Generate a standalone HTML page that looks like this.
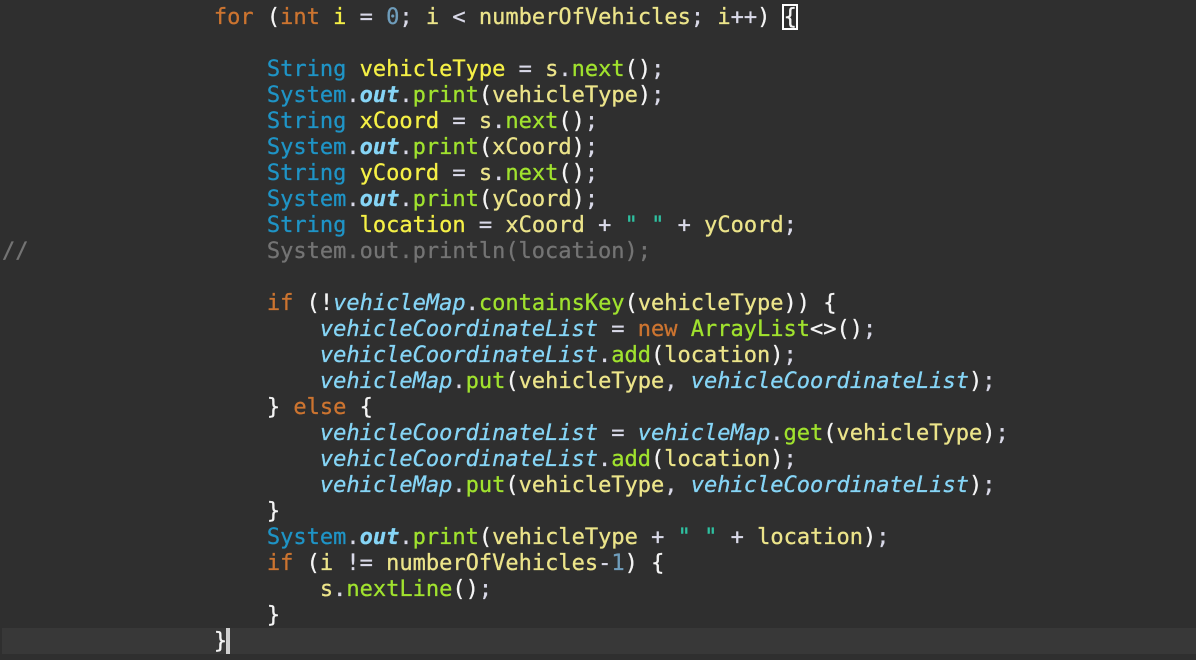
<!DOCTYPE html>
<html><head><meta charset="utf-8"><style>
html,body{margin:0;padding:0;width:1196px;height:660px;overflow:hidden;background:#2f2f2f}
#c{position:absolute;left:0;top:0;width:1196px;height:660px;overflow:hidden;font:22px/26px "DejaVu Sans Mono","Liberation Mono",monospace;color:#d9d9e8;-webkit-text-stroke:.3px currentColor}
.l{position:absolute;left:2px;margin:0;white-space:pre;font:inherit}
.k{color:#cc7430}.t{color:#1f94c6}.v{color:#f5f046}.p{color:#ece48a}.f{color:#86d5f6;font-style:italic}
.o{color:#86d5f6;font-style:italic;font-weight:bold}.m{color:#a0e22e}.n{color:#6f9dbb}.w{color:#f4f4f4}.s{color:#2fc0a0}.c{color:#747474}
#h{position:absolute;left:2px;top:628px;width:1194px;height:26px;background:#383838}
#b{position:absolute;left:782px;top:4px;border:2px solid #fff;box-sizing:border-box;width:16px;height:26px}
#u{position:absolute;left:226px;top:628px;width:4px;height:26px;background:#cfcfcf}
</style></head><body><div id="c">
<div id="h"></div><div id="b"></div><div id="u"></div>
<pre class="l" style="top:5px">                <span class="k">for</span> <span class="w">(</span><span class="k">int</span> <span class="v">i</span> = <span class="n">0</span>; <span class="p">i</span> &lt; <span class="p">numberOfVehicles</span>; <span class="p">i</span>++<span class="w">)</span> <span class="w">{</span></pre>
<pre class="l" style="top:57px">                    <span class="t">String</span> <span class="v">vehicleType</span> = <span class="p">s</span>.<span class="m">next</span><span class="w">()</span>;</pre>
<pre class="l" style="top:83px">                    <span class="t">System</span>.<span class="o">out</span>.<span class="m">print</span><span class="w">(</span><span class="p">vehicleType</span><span class="w">)</span>;</pre>
<pre class="l" style="top:109px">                    <span class="t">String</span> <span class="v">xCoord</span> = <span class="p">s</span>.<span class="m">next</span><span class="w">()</span>;</pre>
<pre class="l" style="top:135px">                    <span class="t">System</span>.<span class="o">out</span>.<span class="m">print</span><span class="w">(</span><span class="p">xCoord</span><span class="w">)</span>;</pre>
<pre class="l" style="top:161px">                    <span class="t">String</span> <span class="v">yCoord</span> = <span class="p">s</span>.<span class="m">next</span><span class="w">()</span>;</pre>
<pre class="l" style="top:187px">                    <span class="t">System</span>.<span class="o">out</span>.<span class="m">print</span><span class="w">(</span><span class="p">yCoord</span><span class="w">)</span>;</pre>
<pre class="l" style="top:213px">                    <span class="t">String</span> <span class="v">location</span> = <span class="p">xCoord</span> + <span class="s">" "</span> + <span class="p">yCoord</span>;</pre>
<pre class="l c" style="top:239px">//                  System.out.println(location);</pre>
<pre class="l" style="top:291px">                    <span class="k">if</span> <span class="w">(!</span><span class="f">vehicleMap</span>.<span class="m">containsKey</span><span class="w">(</span><span class="p">vehicleType</span><span class="w">))</span> <span class="w">{</span></pre>
<pre class="l" style="top:317px">                        <span class="f">vehicleCoordinateList</span> = <span class="k">new</span> <span class="m">ArrayList</span><span class="w">&lt;&gt;()</span>;</pre>
<pre class="l" style="top:343px">                        <span class="f">vehicleCoordinateList</span>.<span class="m">add</span><span class="w">(</span><span class="p">location</span><span class="w">)</span>;</pre>
<pre class="l" style="top:369px">                        <span class="f">vehicleMap</span>.<span class="m">put</span><span class="w">(</span><span class="p">vehicleType</span>, <span class="f">vehicleCoordinateList</span><span class="w">)</span>;</pre>
<pre class="l" style="top:395px">                    <span class="w">}</span> <span class="k">else</span> <span class="w">{</span></pre>
<pre class="l" style="top:421px">                        <span class="f">vehicleCoordinateList</span> = <span class="f">vehicleMap</span>.<span class="m">get</span><span class="w">(</span><span class="p">vehicleType</span><span class="w">)</span>;</pre>
<pre class="l" style="top:447px">                        <span class="f">vehicleCoordinateList</span>.<span class="m">add</span><span class="w">(</span><span class="p">location</span><span class="w">)</span>;</pre>
<pre class="l" style="top:473px">                        <span class="f">vehicleMap</span>.<span class="m">put</span><span class="w">(</span><span class="p">vehicleType</span>, <span class="f">vehicleCoordinateList</span><span class="w">)</span>;</pre>
<pre class="l" style="top:499px">                    <span class="w">}</span></pre>
<pre class="l" style="top:525px">                    <span class="t">System</span>.<span class="o">out</span>.<span class="m">print</span><span class="w">(</span><span class="p">vehicleType</span> + <span class="s">" "</span> + <span class="p">location</span><span class="w">)</span>;</pre>
<pre class="l" style="top:551px">                    <span class="k">if</span> <span class="w">(</span><span class="p">i</span> != <span class="p">numberOfVehicles</span>-<span class="n">1</span><span class="w">)</span> <span class="w">{</span></pre>
<pre class="l" style="top:577px">                        <span class="p">s</span>.<span class="m">nextLine</span><span class="w">()</span>;</pre>
<pre class="l" style="top:603px">                    <span class="w">}</span></pre>
<pre class="l" style="top:629px">                <span class="w">}</span></pre>
</div></body></html>
